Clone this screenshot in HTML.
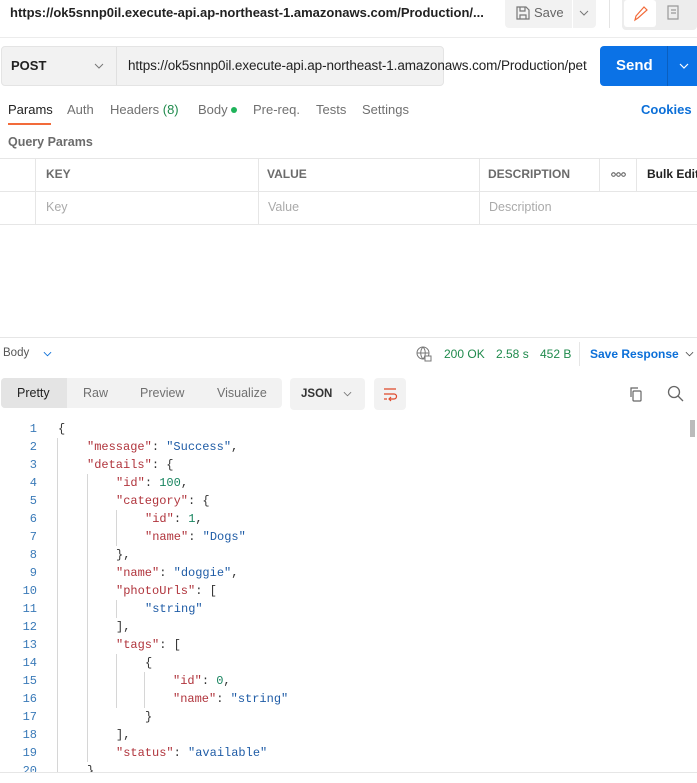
<!DOCTYPE html>
<html><head><meta charset="utf-8"><style>
*{margin:0;padding:0;box-sizing:border-box}
body{width:697px;height:783px;background:#fff;font-family:"Liberation Sans",sans-serif;position:relative;overflow:hidden;color:#212121}
.a{position:absolute;white-space:nowrap}
.code{position:absolute;left:0;top:420px;width:690px;height:352px;overflow:hidden;font-family:"Liberation Mono",monospace;font-size:12px;white-space:pre}
.ln{position:absolute;height:18px;line-height:18px;white-space:pre}
.n{width:37px;text-align:right;color:#3a7ab8;left:0}
.k{color:#b0343c}.s{color:#1f5ca6}.d{color:#198560}.p{color:#333}
.g{position:absolute;width:1px;background:#d6d6d6}
.cv{position:absolute}
</style></head><body>
<div class="a" style="left:10px;top:5px;font-size:13px;font-weight:bold;color:#222">https://ok5snnp0il.execute-api.ap-northeast-1.amazonaws.com/Production/...</div>
<div class="a" style="left:505px;top:0;width:91px;height:28px;background:#f2f2f2;border-radius:0 0 4px 4px"></div>
<div class="a" style="left:572px;top:0;width:1px;height:28px;background:#fff"></div>
<svg class="a" style="left:515px;top:5px" width="16" height="16" viewBox="0 0 16 16" fill="none" stroke="#777" stroke-width="1.2"><path d="M2 2h9l3 3v9H2z M5 2v4h5V2 M5 14v-4h6v4"/></svg>
<div class="a" style="left:534px;top:5px;font-size:13px;color:#666">Save</div>
<svg class="cv" style="left:579px;top:10px" width="10" height="6" viewBox="0 0 10 6" fill="none" stroke="#777" stroke-width="1"><path d="M1 1l4 4 4-4"/></svg>
<div class="a" style="left:609px;top:0;width:1px;height:28px;background:#e4e4e4"></div>
<div class="a" style="left:622px;top:0;width:75px;height:30px;background:#ededed;border-radius:0 0 4px 4px"></div>
<div class="a" style="left:624px;top:0;width:32px;height:27px;background:#fff;border-radius:3px"></div>
<svg class="a" style="left:632px;top:4px" width="16" height="18" viewBox="0 0 16 18" fill="none" stroke="#f26b3a" stroke-width="1.2"><path d="M3 16l1-4 8-9 3 3-9 8z"/></svg>
<svg class="a" style="left:665px;top:4px" width="16" height="18" viewBox="0 0 16 18" fill="none" stroke="#999" stroke-width="1.2"><path d="M3 2h10v13H3z M6 6h5 M6 9h5"/></svg>
<div class="a" style="left:0;top:37px;width:697px;height:1px;background:#ececec"></div>
<div class="a" style="left:1px;top:46px;width:443px;height:40px;background:#f2f2f2;border:1px solid #e4e4e4;border-radius:4px"></div>
<div class="a" style="left:116px;top:47px;width:1px;height:38px;background:#e0e0e0"></div>
<div class="a" style="left:11px;top:58px;font-size:13px;font-weight:bold">POST</div>
<svg class="cv" style="left:94px;top:63px" width="10" height="6" viewBox="0 0 10 6" fill="none" stroke="#777" stroke-width="1"><path d="M1 1l4 4 4-4"/></svg>
<div class="a" style="left:128px;top:58px;font-size:13.5px;color:#222;letter-spacing:-0.1px">https://ok5snnp0il.execute-api.ap-northeast-1.amazonaws.com/Production/pet</div>
<div class="a" style="left:600px;top:46px;width:97px;height:40px;background:#0b72e6;border-radius:4px 0 0 4px"></div>
<div class="a" style="left:667px;top:46px;width:1px;height:40px;background:#0a5fc0"></div>
<div class="a" style="left:616px;top:57px;font-size:15px;font-weight:bold;color:#fff">Send</div>
<svg class="cv" style="left:679px;top:63px" width="10" height="6" viewBox="0 0 10 6" fill="none" stroke="#fff" stroke-width="1.2"><path d="M1 1l4 4 4-4"/></svg>
<div class="a" style="left:8px;top:102px;font-size:13px;color:#212121">Params</div>
<div class="a" style="left:8px;top:123px;width:43px;height:2px;background:#f26b3a"></div>
<div class="a" style="left:67px;top:102px;font-size:13px;color:#707070">Auth</div>
<div class="a" style="left:110px;top:102px;font-size:13px;color:#707070">Headers <span style="color:#1f8a4c">(8)</span></div>
<div class="a" style="left:198px;top:102px;font-size:13px;color:#707070">Body <span style="display:inline-block;width:6px;height:6px;border-radius:3px;background:#1fb35a;vertical-align:1px"></span></div>
<div class="a" style="left:253px;top:102px;font-size:13px;color:#707070">Pre-req.</div>
<div class="a" style="left:316px;top:102px;font-size:13px;color:#707070">Tests</div>
<div class="a" style="left:362px;top:102px;font-size:13px;color:#707070">Settings</div>
<div class="a" style="left:641px;top:102px;font-size:13px;font-weight:bold;color:#0b6fd8">Cookies</div>
<div class="a" style="left:8px;top:135px;font-size:12.5px;font-weight:bold;color:#6b6b6b">Query Params</div>
<div class="a" style="left:0;top:158px;width:697px;height:1px;background:#e6e6e6"></div>
<div class="a" style="left:0;top:191px;width:697px;height:1px;background:#e6e6e6"></div>
<div class="a" style="left:0;top:224px;width:697px;height:1px;background:#e6e6e6"></div>
<div class="a" style="left:35px;top:158px;width:1px;height:66px;background:#e6e6e6"></div>
<div class="a" style="left:258px;top:158px;width:1px;height:66px;background:#e6e6e6"></div>
<div class="a" style="left:479px;top:158px;width:1px;height:66px;background:#e6e6e6"></div>
<div class="a" style="left:599px;top:158px;width:1px;height:33px;background:#e6e6e6"></div>
<div class="a" style="left:636px;top:158px;width:1px;height:33px;background:#e6e6e6"></div>
<div class="a" style="left:46px;top:167px;font-size:12px;font-weight:bold;color:#6b6b6b">KEY</div>
<div class="a" style="left:267px;top:167px;font-size:12px;font-weight:bold;color:#6b6b6b">VALUE</div>
<div class="a" style="left:488px;top:167px;font-size:12px;font-weight:bold;color:#6b6b6b">DESCRIPTION</div>
<svg class="a" style="left:611px;top:172px" width="15" height="5" viewBox="0 0 15 5" fill="none" stroke="#555" stroke-width="1"><circle cx="2.5" cy="2.5" r="1.8"/><circle cx="7.5" cy="2.5" r="1.8"/><circle cx="12.5" cy="2.5" r="1.8"/></svg>
<div class="a" style="left:647px;top:167px;font-size:12px;font-weight:bold;color:#222">Bulk Edit</div>
<div class="a" style="left:46px;top:200px;font-size:12.5px;color:#aaa">Key</div>
<div class="a" style="left:268px;top:200px;font-size:12.5px;color:#aaa">Value</div>
<div class="a" style="left:489px;top:200px;font-size:12.5px;color:#aaa">Description</div>
<div class="a" style="left:0;top:337px;width:697px;height:1px;background:#e6e6e6"></div>
<div class="a" style="left:3px;top:347px;font-size:11.5px;color:#555">Body</div>
<svg class="cv" style="left:43px;top:351px" width="9" height="6" viewBox="0 0 10 6" fill="none" stroke="#0b6fd8" stroke-width="1"><path d="M1 1l4 4 4-4"/></svg>
<svg class="a" style="left:416px;top:346px" width="16" height="16" viewBox="0 0 16 16" fill="none" stroke="#777" stroke-width="1"><circle cx="7" cy="7" r="6"/><path d="M1 7h12M7 1c-3 3-3 9 0 12M7 1c3 3 3 9 0 12"/><rect x="9" y="10" width="6" height="5" fill="#fff"/></svg>
<div class="a" style="left:444px;top:347px;font-size:12px;color:#1f8a4c">200 OK</div>
<div class="a" style="left:496px;top:347px;font-size:12px;color:#1f8a4c">2.58 s</div>
<div class="a" style="left:540px;top:347px;font-size:12px;color:#1f8a4c">452 B</div>
<div class="a" style="left:579px;top:342px;width:1px;height:24px;background:#e6e6e6"></div>
<div class="a" style="left:590px;top:347px;font-size:12px;font-weight:bold;color:#0b6fd8">Save Response</div>
<svg class="cv" style="left:685px;top:351px" width="9" height="6" viewBox="0 0 10 6" fill="none" stroke="#555" stroke-width="1"><path d="M1 1l4 4 4-4"/></svg>
<div class="a" style="left:1px;top:378px;width:281px;height:30px;background:#f2f2f2;border-radius:4px"></div>
<div class="a" style="left:1px;top:378px;width:66px;height:30px;background:#e4e4e4;border-radius:4px 0 0 4px"></div>
<div class="a" style="left:17px;top:386px;font-size:12.5px;color:#222">Pretty</div>
<div class="a" style="left:83px;top:386px;font-size:12.5px;color:#707070">Raw</div>
<div class="a" style="left:140px;top:386px;font-size:12.5px;color:#707070">Preview</div>
<div class="a" style="left:217px;top:386px;font-size:12.5px;color:#707070">Visualize</div>
<div class="a" style="left:290px;top:378px;width:75px;height:32px;background:#f2f2f2;border-radius:4px"></div>
<div class="a" style="left:301px;top:388px;font-size:11.5px;font-weight:bold;color:#333">JSON</div>
<svg class="cv" style="left:343px;top:391px" width="9" height="6" viewBox="0 0 10 6" fill="none" stroke="#777" stroke-width="1"><path d="M1 1l4 4 4-4"/></svg>
<div class="a" style="left:374px;top:378px;width:32px;height:32px;background:#f2f2f2;border-radius:4px"></div>
<svg class="a" style="left:382px;top:386px" width="16" height="16" viewBox="0 0 16 16" fill="none" stroke="#e0482a" stroke-width="1.2"><path d="M2 3h12M2 8h10a2.5 2.5 0 010 5H8M2 13h3M9 11l-2 2 2 2"/></svg>
<svg class="a" style="left:628px;top:386px" width="16" height="16" viewBox="0 0 16 16" fill="none" stroke="#666" stroke-width="1.2"><rect x="5" y="5" width="8" height="10" rx="1"/><path d="M3 11V2h7"/></svg>
<svg class="a" style="left:667px;top:385px" width="17" height="17" viewBox="0 0 17 17" fill="none" stroke="#666" stroke-width="1.3"><circle cx="7" cy="7" r="5.5"/><path d="M11 11l5 5"/></svg>
<div class="a" style="left:690px;top:420px;width:5px;height:17px;background:#bbb"></div>
<div class="code">
<div class="g" style="left:57px;top:18px;height:342px"></div>
<div class="g" style="left:87px;top:54px;height:288px"></div>
<div class="g" style="left:116px;top:90px;height:36px"></div>
<div class="g" style="left:116px;top:180px;height:18px"></div>
<div class="g" style="left:116px;top:234px;height:54px"></div>
<div class="g" style="left:144px;top:252px;height:36px"></div>
<div class="ln n" style="top:0">1</div><div class="ln p" style="left:58px;top:0">{</div>
<div class="ln n" style="top:18px">2</div><div class="ln" style="left:87px;top:18px"><span class="k">"message"</span><span class="p">: </span><span class="s">"Success"</span><span class="p">,</span></div>
<div class="ln n" style="top:36px">3</div><div class="ln" style="left:87px;top:36px"><span class="k">"details"</span><span class="p">: {</span></div>
<div class="ln n" style="top:54px">4</div><div class="ln" style="left:116px;top:54px"><span class="k">"id"</span><span class="p">: </span><span class="d">100</span><span class="p">,</span></div>
<div class="ln n" style="top:72px">5</div><div class="ln" style="left:116px;top:72px"><span class="k">"category"</span><span class="p">: {</span></div>
<div class="ln n" style="top:90px">6</div><div class="ln" style="left:145px;top:90px"><span class="k">"id"</span><span class="p">: </span><span class="d">1</span><span class="p">,</span></div>
<div class="ln n" style="top:108px">7</div><div class="ln" style="left:145px;top:108px"><span class="k">"name"</span><span class="p">: </span><span class="s">"Dogs"</span></div>
<div class="ln n" style="top:126px">8</div><div class="ln p" style="left:116px;top:126px">},</div>
<div class="ln n" style="top:144px">9</div><div class="ln" style="left:116px;top:144px"><span class="k">"name"</span><span class="p">: </span><span class="s">"doggie"</span><span class="p">,</span></div>
<div class="ln n" style="top:162px">10</div><div class="ln" style="left:116px;top:162px"><span class="k">"photoUrls"</span><span class="p">: [</span></div>
<div class="ln n" style="top:180px">11</div><div class="ln s" style="left:145px;top:180px">"string"</div>
<div class="ln n" style="top:198px">12</div><div class="ln p" style="left:116px;top:198px">],</div>
<div class="ln n" style="top:216px">13</div><div class="ln" style="left:116px;top:216px"><span class="k">"tags"</span><span class="p">: [</span></div>
<div class="ln n" style="top:234px">14</div><div class="ln p" style="left:145px;top:234px">{</div>
<div class="ln n" style="top:252px">15</div><div class="ln" style="left:173px;top:252px"><span class="k">"id"</span><span class="p">: </span><span class="d">0</span><span class="p">,</span></div>
<div class="ln n" style="top:270px">16</div><div class="ln" style="left:173px;top:270px"><span class="k">"name"</span><span class="p">: </span><span class="s">"string"</span></div>
<div class="ln n" style="top:288px">17</div><div class="ln p" style="left:145px;top:288px">}</div>
<div class="ln n" style="top:306px">18</div><div class="ln p" style="left:116px;top:306px">],</div>
<div class="ln n" style="top:324px">19</div><div class="ln" style="left:116px;top:324px"><span class="k">"status"</span><span class="p">: </span><span class="s">"available"</span></div>
<div class="ln n" style="top:342px">20</div><div class="ln p" style="left:87px;top:342px">}</div>
</div>
<div class="a" style="left:0;top:772px;width:697px;height:11px;background:#fff;border-top:1px solid #e6e6e6"></div>
</body></html>
